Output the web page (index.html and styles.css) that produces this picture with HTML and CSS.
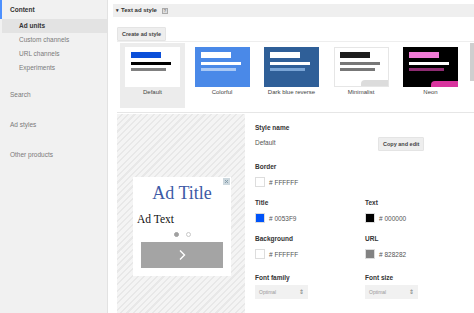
FILE: index.html
```html
<!DOCTYPE html>
<html>
<head>
<meta charset="utf-8">
<link rel="stylesheet" href="styles.css">
</head>
<body>
<div class="app">
  <nav class="sidebar">
    <div class="nav-head">Content</div>
    <div class="nav-sub selected">Ad units</div>
    <div class="nav-sub">Custom channels</div>
    <div class="nav-sub">URL channels</div>
    <div class="nav-sub">Experiments</div>
    <div class="nav-item first">Search</div>
    <div class="nav-item">Ad styles</div>
    <div class="nav-item">Other products</div>
  </nav>
  <main class="main">
    <div class="section-head"><span class="caret">▾</span>Text ad style<span class="help">?</span></div>
    <div class="body">
      <div class="toolbar"><button class="btn">Create ad style</button></div>
      <div class="styles">
        <div class="card selected">
          <div class="thumb t-default"><i class="b1"></i><i class="b2"></i><i class="b3"></i></div>
          <div class="card-label">Default</div>
        </div>
        <div class="card">
          <div class="thumb t-colorful"><i class="b1"></i><i class="b2"></i><i class="b3"></i></div>
          <div class="card-label">Colorful</div>
        </div>
        <div class="card">
          <div class="thumb t-darkblue"><i class="b1"></i><i class="b2"></i><i class="b3"></i></div>
          <div class="card-label">Dark blue reverse</div>
        </div>
        <div class="card">
          <div class="thumb t-minimal"><i class="b1"></i><i class="b2"></i><i class="b3"></i><i class="tab"></i></div>
          <div class="card-label">Minimalist</div>
        </div>
        <div class="card">
          <div class="thumb t-neon"><i class="b1"></i><i class="b2"></i><i class="b3"></i><i class="tab"></i></div>
          <div class="card-label">Neon</div>
        </div>
        <div class="scrollbar"></div>
      </div>
      <div class="editor">
        <div class="preview">
          <div class="ad">
            <svg class="adchoices" width="7" height="7" viewBox="0 0 7 7"><rect width="7" height="7" fill="#cdd8de"/><path d="M2 2 L5 5 M5 2 L2 5" stroke="#7f98a6" stroke-width="0.9"/></svg>
            <div class="ad-title">Ad Title</div>
            <div class="ad-text">Ad Text</div>
            <div class="dots"><span class="dot on"></span><span class="dot"></span></div>
            <div class="ad-btn"><svg width="8" height="12" viewBox="0 0 8 12"><polyline points="2,1.5 6.5,6 2,10.5" fill="none" stroke="#fff" stroke-width="1.4"/></svg></div>
          </div>
        </div>
        <div class="form">
          <div class="row r-name">
            <div class="cell">
              <div class="label">Style name</div>
              <div class="value">Default</div>
            </div>
            <div class="cell"><button class="btn copy">Copy and edit</button></div>
          </div>
          <div class="row">
            <div class="cell">
              <div class="label">Border</div>
              <div class="swatch-row"><span class="swatch" style="background:#ffffff"></span># FFFFFF</div>
            </div>
          </div>
          <div class="row">
            <div class="cell">
              <div class="label">Title</div>
              <div class="swatch-row"><span class="swatch" style="background:#0053f9"></span># 0053F9</div>
            </div>
            <div class="cell">
              <div class="label">Text</div>
              <div class="swatch-row"><span class="swatch" style="background:#000000"></span># 000000</div>
            </div>
          </div>
          <div class="row">
            <div class="cell">
              <div class="label">Background</div>
              <div class="swatch-row"><span class="swatch" style="background:#ffffff"></span># FFFFFF</div>
            </div>
            <div class="cell">
              <div class="label">URL</div>
              <div class="swatch-row"><span class="swatch" style="background:#828282"></span># 828282</div>
            </div>
          </div>
          <div class="row r-font">
            <div class="cell">
              <div class="label">Font family</div>
              <div class="select">Optimal<span class="arrows">⇕</span></div>
            </div>
            <div class="cell">
              <div class="label">Font size</div>
              <div class="select">Optimal<span class="arrows">⇕</span></div>
            </div>
          </div>
        </div>
      </div>
    </div>
  </main>
</div>
</body>
</html>
```
FILE: styles.css
```css
* { box-sizing: border-box; }
html, body { margin: 0; padding: 0; background: #fff; }
body {
  font-family: "Liberation Sans", Arial, sans-serif;
  width: 474px;
  height: 313px;
  overflow: hidden;
}
.app { display: flex; height: 313px; }

.sidebar {
  width: 108px;
  flex: none;
  background: #f1f1f1;
  border-right: 1px solid #e2e2e2;
  font-size: 6.5px;
  color: #7a7a7a;
}
.nav-head {
  height: 19px;
  line-height: 19px;
  color: #333;
  font-weight: bold;
  border-left: 2px solid #4d90fe;
  padding-left: 8px;
}
.nav-sub {
  height: 14px;
  line-height: 14px;
  padding-left: 19px;
}
.nav-sub.selected {
  background: #e3e3e3;
  color: #333;
  font-weight: bold;
  margin-left: 2px;
  padding-left: 17px;
}
.nav-item {
  height: 30px;
  line-height: 30px;
  padding-left: 10px;
}
.nav-item.first { margin-top: 5px; }

.main {
  flex: 1;
  padding: 4px 0 0 5px;
  min-width: 0;
}
.section-head {
  height: 13px;
  line-height: 13px;
  background: #efefef;
  font-size: 6px;
  font-weight: bold;
  color: #333;
  padding-left: 3px;
  display: flex;
  align-items: center;
}
.caret { font-size: 5px; margin-right: 2px; }
.help {
  display: inline-block;
  width: 6px;
  height: 6px;
  border: 1px solid #aaa;
  background: #ddd;
  font-size: 4px;
  line-height: 4px;
  text-align: center;
  color: #777;
  margin-left: 5px;
}
.body { padding-left: 4px; }
.toolbar { padding-top: 5px; height: 24px; }
.btn {
  font-family: "Liberation Sans", Arial, sans-serif;
  font-size: 5.5px;
  font-weight: bold;
  color: #444;
  background: #eeeeee;
  border: 1px solid #e4e4e4;
  border-radius: 1px;
  height: 14px;
  padding: 0 4px;
  margin: 0;
}
.styles {
  position: relative;
  border-top: 1px solid #eeeeee;
  border-bottom: 1px solid #e6e6e6;
  padding: 1px 0 4px 3px;
  display: flex;
  gap: 4.5px;
  height: 72px;
}
.card {
  width: 65px;
  height: 65px;
  padding: 4px 5px 0;
  flex: none;
}
.card.selected { background: #ececec; }
.card-label {
  font-size: 6px;
  color: #444;
  text-align: center;
  margin-top: 2px;
  white-space: nowrap;
}
.thumb {
  position: relative;
  width: 55px;
  height: 40px;
  background: #fff;
}
.thumb i { position: absolute; left: 6px; display: block; }
.thumb .b1 { top: 5px; width: 30px; height: 6px; }
.thumb .b2 { top: 15px; width: 40px; height: 3px; }
.thumb .b3 { top: 21px; width: 35px; height: 3px; }
.t-default .b1 { background: #0b4fd9; }
.t-default .b2 { background: #000; }
.t-default .b3 { background: #808080; }
.t-colorful { background: #4a89e8; }
.t-colorful .b1, .t-colorful .b2 { background: #fff; }
.t-colorful .b3 { background: #a9c8f5; }
.t-darkblue { background: #2f5f98; }
.t-darkblue .b1, .t-darkblue .b2 { background: #fff; }
.t-darkblue .b3 { background: #7aa5d6; }
.t-minimal { border: 1px solid #e6e6e6; }
.t-minimal i { left: 5px; }
.t-minimal .b1 { top: 4px; background: #1e1e1e; }
.t-minimal .b2 { top: 14px; background: #777; }
.t-minimal .b3 { top: 20px; background: #777; }
.thumb .tab {
  left: auto;
  right: 0;
  bottom: 0;
  width: 27px;
  height: 6px;
  border-radius: 4px 0 0 0;
}
.t-minimal .tab { background: #dcdcdc; }
.t-neon { background: #000; }
.t-neon .b1 { background: #f07bd6; }
.t-neon .b2 { background: #fff; }
.t-neon .b3 { background: #8e2c72; }
.t-neon .tab { background: #d8349e; }
.scrollbar {
  position: absolute;
  right: 0;
  top: 1px;
  width: 4px;
  height: 38px;
  background: #cfcfcf;
}

.editor { display: flex; padding-top: 1px; }
.preview {
  width: 128px;
  height: 200px;
  flex: none;
  background: repeating-linear-gradient(135deg, #f4f4f4 0 3px, #e8e8e8 3px 4.5px);
  padding: 63px 14px 0 16px;
}
.ad {
  position: relative;
  background: #fff;
  width: 98px;
  height: 99px;
  padding-top: 5px;
}
.adchoices { position: absolute; right: 1px; top: 1px; }
.ad-title {
  font-family: "Liberation Serif", "Times New Roman", serif;
  font-size: 18px;
  color: #3d5aa6;
  text-align: center;
  line-height: 22px;
}
.ad-text {
  font-family: "Liberation Serif", "Times New Roman", serif;
  font-size: 11.5px;
  color: #111;
  padding-left: 4px;
  margin-top: 8px;
  line-height: 14px;
}
.dots {
  display: flex;
  justify-content: center;
  gap: 7px;
  margin-top: 6px;
}
.dot {
  width: 5px;
  height: 5px;
  border-radius: 50%;
  border: 1px solid #c8c8c8;
  background: #fff;
}
.dot.on { background: #a0a0a0; border-color: #a0a0a0; }
.ad-btn {
  margin: 5px 0 0 8px;
  width: 82px;
  height: 26px;
  background: #a4a4a4;
  display: flex;
  align-items: center;
  justify-content: center;
}

.form {
  flex: 1;
  padding: 9px 0 0 10px;
  font-size: 6.5px;
  color: #555;
}
.row { display: flex; margin-top: 11px; }
.row.r-name { margin-top: 0; height: 25px; }
.row.r-name + .row { margin-top: 14px; }
.row.r-font { margin-top: 14px; }
.cell { width: 110px; flex: none; }
.label {
  font-weight: bold;
  color: #333;
  height: 10px;
  line-height: 10px;
  margin-bottom: 5px;
}
.value { height: 10px; line-height: 10px; }
.swatch-row {
  display: flex;
  align-items: center;
  gap: 4px;
  height: 10px;
}
.swatch {
  width: 10px;
  height: 10px;
  border: 1px solid #ddd;
}
.btn.copy { margin: 14px 0 0 13px; }
.r-font .label { margin-bottom: 2px; }
.select {
  width: 53px;
  height: 14px;
  line-height: 14px;
  background: #f1f1f1;
  color: #999;
  font-size: 5px;
  padding-left: 4px;
  position: relative;
}
.arrows {
  position: absolute;
  right: 4px;
  top: 0;
  font-size: 6px;
  color: #777;
}
```
